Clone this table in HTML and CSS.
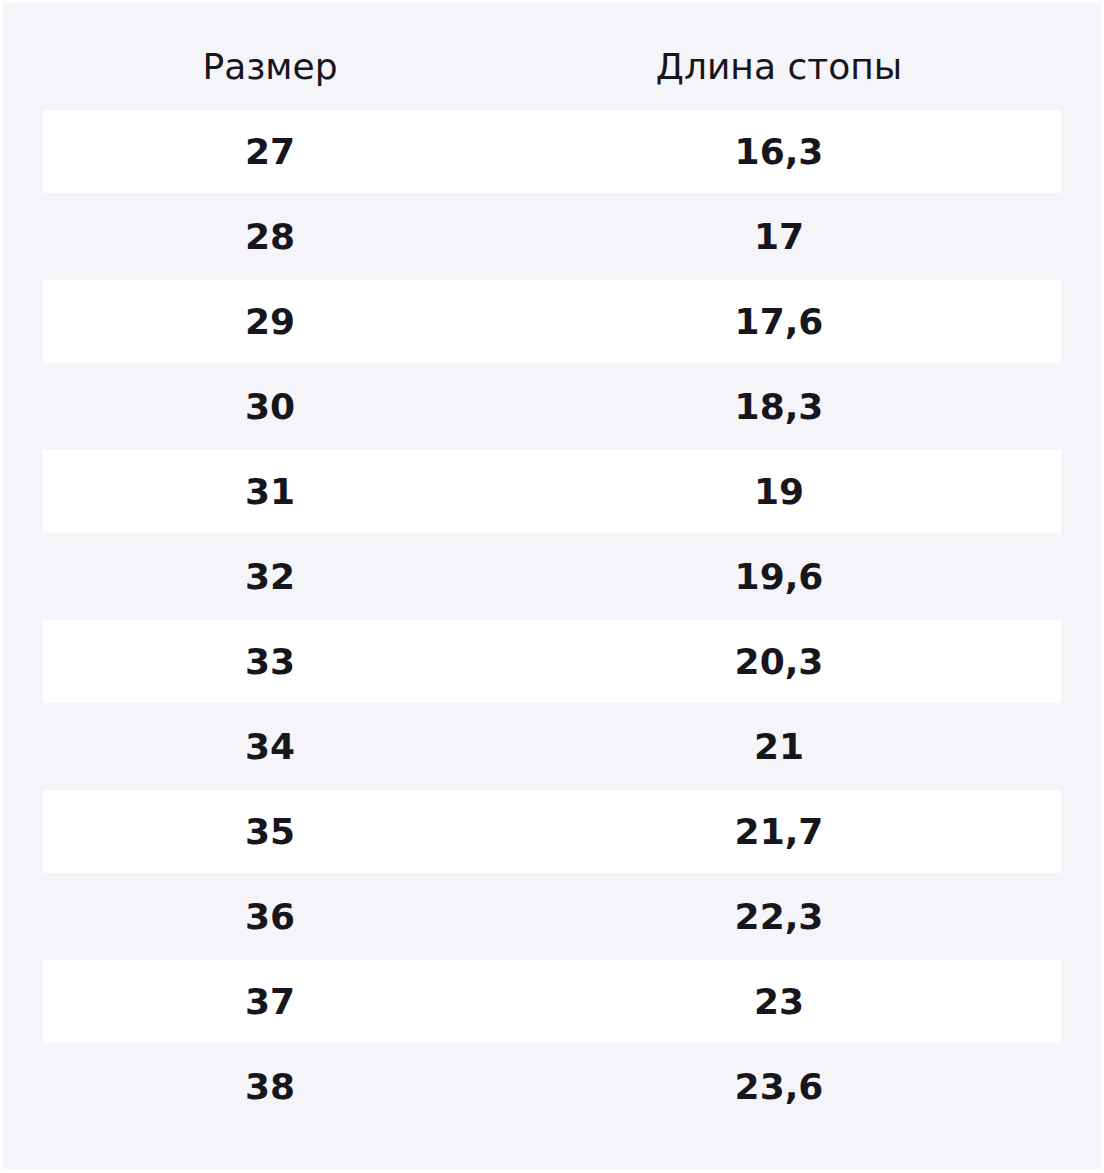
FILE: index.html
```html
<!DOCTYPE html>
<html lang="ru">
<head>
<meta charset="utf-8">
<link rel="stylesheet" href="styles.css">
</head>
<body>
<div class="panel">
  <div class="row head"><div class="cell">Размер</div><div class="cell">Длина стопы</div></div>
  <div class="row odd"><div class="cell">27</div><div class="cell">16,3</div></div>
  <div class="row even"><div class="cell">28</div><div class="cell">17</div></div>
  <div class="row odd"><div class="cell">29</div><div class="cell">17,6</div></div>
  <div class="row even"><div class="cell">30</div><div class="cell">18,3</div></div>
  <div class="row odd"><div class="cell">31</div><div class="cell">19</div></div>
  <div class="row even"><div class="cell">32</div><div class="cell">19,6</div></div>
  <div class="row odd"><div class="cell">33</div><div class="cell">20,3</div></div>
  <div class="row even"><div class="cell">34</div><div class="cell">21</div></div>
  <div class="row odd"><div class="cell">35</div><div class="cell">21,7</div></div>
  <div class="row even"><div class="cell">36</div><div class="cell">22,3</div></div>
  <div class="row odd"><div class="cell">37</div><div class="cell">23</div></div>
  <div class="row even"><div class="cell">38</div><div class="cell">23,6</div></div>
</div>
</body>
</html>
```
FILE: styles.css
```css
html, body {
  margin: 0;
  padding: 0;
  background: #ffffff;
}
body {
  padding: 3px;
  font-family: "DejaVu Sans", sans-serif;
  color: #17161d;
}
.panel {
  width: 1098px;
  height: 1166px;
  box-sizing: border-box;
  background: #f4f4f9;
  padding: 40px 40px 39px;
}
.row {
  display: grid;
  grid-template-columns: 454px 1fr;
  align-items: center;
  text-align: center;
}
.head {
  height: 67px;
  box-sizing: border-box;
  padding-top: 6px;
  align-items: start;
  font-size: 36px;
  line-height: 36px;
}
.odd, .even {
  font-size: 36px;
  font-weight: bold;
}
.odd {
  height: 83px;
  background: #ffffff;
}
.even {
  height: 87px;
}
```
